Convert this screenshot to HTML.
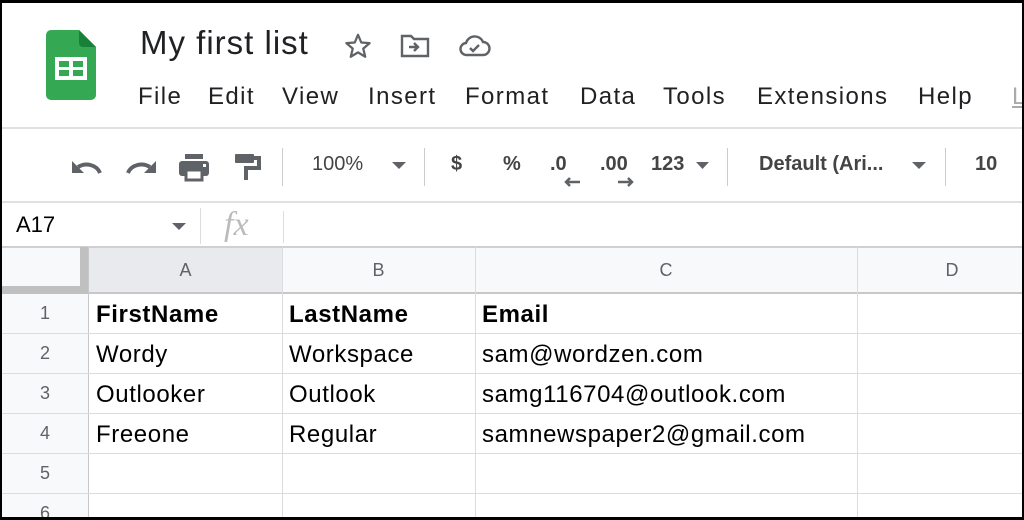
<!DOCTYPE html>
<html><head><meta charset="utf-8"><style>
*{margin:0;padding:0;box-sizing:border-box}
body{width:1024px;height:520px;background:#000;position:relative;overflow:hidden;font-family:"Liberation Sans",Arial,sans-serif}
#w{position:absolute;left:2px;top:3px;width:1020px;height:514px;background:#fff;overflow:hidden}
.a{position:absolute;white-space:nowrap}
.menu{font-size:24px;letter-spacing:1.4px;color:#202124;top:80px}
.tb{font-size:20px;color:#444;top:150px;font-weight:bold}
.hl{position:absolute;height:1px;background:#dadce0}
.vl{position:absolute;width:1px;background:#dadce0}
.cell{position:absolute;font-size:24px;letter-spacing:0.6px;color:#000}
.rn{position:absolute;width:86px;text-align:center;font-size:18px;color:#5f6368}
.cl{position:absolute;font-size:18px;color:#5f6368;text-align:center;top:257px}
</style></head><body><div id="w">
<svg class="a" style="left:44px;top:27px" width="50" height="70" viewBox="0 0 50 70">
<path d="M5 0H33L50 17V65A5 5 0 0 1 45 70H5A5 5 0 0 1 0 65V5A5 5 0 0 1 5 0Z" fill="#34a853"/>
<path d="M33 0L50 17H37A4 4 0 0 1 33 13Z" fill="#188038"/>
<rect x="9" y="27" width="32" height="23" fill="#fff"/>
<rect x="13" y="31" width="10" height="6" fill="#34a853"/><rect x="27" y="31" width="10" height="6" fill="#34a853"/>
<rect x="13" y="40" width="10" height="6" fill="#34a853"/><rect x="27" y="40" width="10" height="6" fill="#34a853"/>
</svg>
<div class="a" style="left:138px;top:21px;font-size:33px;letter-spacing:1px;color:#202124">My first list</div>
<svg class="a" style="left:341px;top:28px" width="30" height="30" viewBox="0 0 24 24"><path d="M12 3l2.6 6.2 6.7.5-5.1 4.4 1.6 6.5L12 17.1 6.2 20.6l1.6-6.5L2.7 9.7l6.7-.5z" fill="none" stroke="#5f6368" stroke-width="1.8" stroke-linejoin="round"/></svg>
<svg class="a" style="left:398px;top:30px" width="30" height="26" viewBox="0 0 30 26"><path d="M2 3h9l3 3h14v17H2z" fill="none" stroke="#5f6368" stroke-width="2.4"/><path d="M9 14h9M14 10l4 4-4 4" fill="none" stroke="#5f6368" stroke-width="2.4"/></svg>
<svg class="a" style="left:456px;top:31px" width="34" height="24" viewBox="0 0 34 24"><path d="M9 21A6 6 0 0 1 8 9 9 9 0 0 1 25 8a6.5 6.5 0 0 1 0 13z" fill="none" stroke="#5f6368" stroke-width="2.4"/><path d="M12 14l3 3 6-6" fill="none" stroke="#5f6368" stroke-width="2.4"/></svg>
<div class="a menu" style="left:136px">File</div>
<div class="a menu" style="left:206px">Edit</div>
<div class="a menu" style="left:280px">View</div>
<div class="a menu" style="left:366px">Insert</div>
<div class="a menu" style="left:463px">Format</div>
<div class="a menu" style="left:578px">Data</div>
<div class="a menu" style="left:661px">Tools</div>
<div class="a menu" style="left:755px">Extensions</div>
<div class="a menu" style="left:916px">Help</div>
<div class="a menu" style="left:1010px;text-decoration:underline;color:#aaa">L</div>
<div class="hl" style="left:0;top:124px;width:1020px;height:2px;background:#e0e0e0"></div>
<svg class="a" style="left:68px;top:152px" width="34" height="22" viewBox="0 0 34 22"><path d="M30 18C27 10 16 7 8 12" fill="none" stroke="#5f6368" stroke-width="4"/><path d="M2 6v12h12z" fill="#5f6368"/></svg>
<svg class="a" style="left:122px;top:152px" width="34" height="22" viewBox="0 0 34 22"><path d="M4 18C7 10 18 7 26 12" fill="none" stroke="#5f6368" stroke-width="4"/><path d="M32 6v12H20z" fill="#5f6368"/></svg>
<svg class="a" style="left:176px;top:149px" width="32" height="30" viewBox="0 0 32 30"><rect x="7" y="2" width="18" height="5" fill="#5f6368"/><rect x="1" y="9" width="30" height="15" rx="3" fill="#5f6368"/><rect x="8" y="18" width="16" height="10" fill="#fff" stroke="#5f6368" stroke-width="3"/><rect x="25" y="12" width="3" height="3" fill="#fff"/></svg>
<svg class="a" style="left:232px;top:149px" width="28" height="30" viewBox="0 0 28 30"><rect x="1" y="2" width="19" height="9" rx="1" fill="#5f6368"/><path d="M20 6h5v10H12v12" fill="none" stroke="#5f6368" stroke-width="4"/></svg>
<div class="vl" style="left:280px;top:145px;height:38px;background:#ccc"></div>
<div class="a tb" style="left:310px;font-weight:normal;color:#444">100%</div>
<svg class="a" style="left:390px;top:159px" width="14" height="8"><path d="M0 0h14L7 7z" fill="#5f6368"/></svg>
<div class="vl" style="left:422px;top:145px;height:38px;background:#ccc"></div>
<div class="a tb" style="left:449px">$</div>
<div class="a tb" style="left:501px">%</div>
<div class="a tb" style="left:548px">.0</div>
<svg class="a" style="left:562px;top:174px" width="16" height="10"><path d="M2 5h14M6 1L2 5l4 4" fill="none" stroke="#5f6368" stroke-width="2.5"/></svg>
<div class="a tb" style="left:598px">.00</div>
<svg class="a" style="left:616px;top:174px" width="16" height="10"><path d="M0 5h13M10 1l4 4-4 4" fill="none" stroke="#5f6368" stroke-width="2.5"/></svg>
<div class="a tb" style="left:649px">123</div>
<svg class="a" style="left:694px;top:159px" width="13" height="8"><path d="M0 0h13L6.5 7z" fill="#5f6368"/></svg>
<div class="vl" style="left:725px;top:145px;height:38px;background:#ccc"></div>
<div class="a tb" style="left:757px">Default (Ari...</div>
<svg class="a" style="left:910px;top:159px" width="14" height="8"><path d="M0 0h14L7 7z" fill="#5f6368"/></svg>
<div class="vl" style="left:943px;top:145px;height:38px;background:#ccc"></div>
<div class="a tb" style="left:973px">10</div>
<div class="hl" style="left:0;top:198px;width:1020px;height:2px;background:#e0e0e0"></div>
<div class="a" style="left:14px;top:209px;font-size:22px;color:#000">A17</div>
<svg class="a" style="left:170px;top:220px" width="14" height="8"><path d="M0 0h14L7 7z" fill="#5f6368"/></svg>
<div class="vl" style="left:198px;top:205px;height:36px;background:#ddd"></div>
<div class="a" style="left:222px;top:203px;font-size:34px;color:#bbb;font-family:'Liberation Serif',serif;font-style:italic">fx</div>
<div class="vl" style="left:281px;top:208px;height:32px;background:#ddd"></div>
<div class="a" style="left:0;top:244px;width:1020px;height:46px;background:#f8f9fa"></div>
<div class="a" style="left:87px;top:244px;width:193px;height:46px;background:#e8eaed"></div>
<div class="hl" style="left:0;top:243px;width:1020px;height:2px;background:#d0d0d0"></div>
<div class="a" style="left:78px;top:244px;width:9px;height:46px;background:#c0c0c0"></div>
<div class="a" style="left:0;top:283px;width:87px;height:8px;background:#c0c0c0"></div>
<div class="hl" style="left:87px;top:289px;width:935px;height:2px;background:#c8c8c8"></div>
<div class="cl" style="left:87px;width:193px">A</div>
<div class="cl" style="left:280px;width:193px">B</div>
<div class="cl" style="left:473px;width:382px">C</div>
<div class="cl" style="left:855px;width:190px">D</div>
<div class="a" style="left:0;top:291px;width:87px;height:230px;background:#f8f9fa"></div>
<div class="vl" style="left:86px;top:244px;height:280px;background:#c8c8c8"></div>
<div class="vl" style="left:280px;top:244px;height:280px"></div>
<div class="vl" style="left:473px;top:244px;height:280px"></div>
<div class="vl" style="left:855px;top:244px;height:280px"></div>
<div class="hl" style="left:0;top:330px;width:1020px"></div>
<div class="hl" style="left:0;top:370px;width:1020px"></div>
<div class="hl" style="left:0;top:410px;width:1020px"></div>
<div class="hl" style="left:0;top:450px;width:1020px"></div>
<div class="hl" style="left:0;top:490px;width:1020px"></div>
<div class="rn" style="left:0;top:300px">1</div>
<div class="rn" style="left:0;top:340px">2</div>
<div class="rn" style="left:0;top:380px">3</div>
<div class="rn" style="left:0;top:420px">4</div>
<div class="rn" style="left:0;top:460px">5</div>
<div class="rn" style="left:0;top:500px">6</div>
<div class="cell" style="left:94px;top:298px;font-weight:bold">FirstName</div>
<div class="cell" style="left:287px;top:298px;font-weight:bold">LastName</div>
<div class="cell" style="left:480px;top:298px;font-weight:bold">Email</div>
<div class="cell" style="left:94px;top:338px">Wordy</div>
<div class="cell" style="left:287px;top:338px">Workspace</div>
<div class="cell" style="left:480px;top:338px">sam@wordzen.com</div>
<div class="cell" style="left:94px;top:378px">Outlooker</div>
<div class="cell" style="left:287px;top:378px">Outlook</div>
<div class="cell" style="left:480px;top:378px">samg116704@outlook.com</div>
<div class="cell" style="left:94px;top:418px">Freeone</div>
<div class="cell" style="left:287px;top:418px">Regular</div>
<div class="cell" style="left:480px;top:418px">samnewspaper2@gmail.com</div>
</div></body></html>
